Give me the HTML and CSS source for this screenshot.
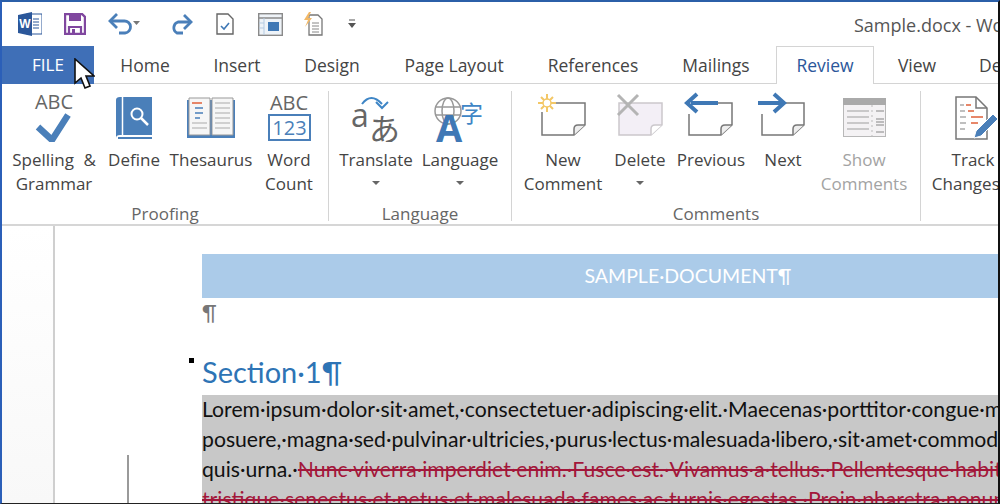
FILE: index.html
```html
<!DOCTYPE html>
<html lang="en">
<head>
    <meta charset="UTF-8">
    <title>Sample.docx - Word</title>
    <link rel="stylesheet" href="styles.css">
</head>
<body>
<div class="app">
    <div class="titlebar">
        <svg class="qat" width="24" height="24" viewBox="0 0 24 24">
            <rect x="9" y="2" width="15" height="20" fill="#fff" stroke="#2b579a"/>
            <path d="M15 7h6M15 10h6M15 13h6M15 16h6" stroke="#2b579a"/>
            <path d="M0 3 14 0v24L0 21z" fill="#2b579a"/>
            <text x="7" y="16" class="word-w">W</text>
        </svg>
        <svg class="qat gap22" width="22" height="22" viewBox="0 0 22 22">
            <path d="M1 1h17l3 3v17H1z" fill="none" stroke="#80479f" stroke-width="2.4"/>
            <rect x="5" y="1" width="12" height="7" fill="#80479f"/>
            <path d="M5 21v-7h12v7" fill="none" stroke="#80479f" stroke-width="2.2"/>
            <rect x="8" y="16" width="3" height="5" fill="#80479f"/>
        </svg>
        <svg class="qat gap22" width="32" height="22" viewBox="0 0 32 22">
            <path d="M3 8h13a6 6 0 0 1 1 12h-6" fill="none" stroke="#4a7fb9" stroke-width="2.8"/>
            <path d="M9 1 2 8l7 7" fill="none" stroke="#4a7fb9" stroke-width="2.8"/>
            <path d="M25 8h7l-3.500 4z" fill="#777"/>
        </svg>
        <svg class="qat gap30" width="23" height="22" viewBox="0 0 23 22">
            <path d="M20 9H8a6 6 0 0 0-1 11h6" fill="none" stroke="#4a7fb9" stroke-width="2.8"/>
            <path d="M14 2l7 7-7 7" fill="none" stroke="#4a7fb9" stroke-width="2.8"/>
        </svg>
        <svg class="qat gap23" width="18" height="22" viewBox="0 0 18 22">
            <path d="M1 1h11l5 5v15H1z" fill="#fff" stroke="#666" stroke-width="1.400"/>
            <path d="M5 13l3 3 5-6" fill="none" stroke="#3f78b5" stroke-width="1.600"/>
        </svg>
        <svg class="qat gap24" width="25" height="23" viewBox="0 0 25 23">
            <rect x=".7" y=".7" width="23.600" height="21.600" fill="#eef3f8" stroke="#8a8a8a" stroke-width="1.400"/>
            <path d="M1 5h23" stroke="#8a8a8a" stroke-width="1.500"/>
            <path d="M6 5v17M1 10h5M1 15h5" stroke="#b5cbe2"/>
            <rect x="10" y="9" width="11" height="9" fill="#3f78b5"/>
        </svg>
        <svg class="qat gap20" width="20" height="24" viewBox="0 0 20 24">
            <path d="M6 3h9l4 4v16H6z" fill="#fff" stroke="#777" stroke-width="1.300"/>
            <path d="M9 11h7M9 14h7M9 17h7M9 20h7" stroke="#888"/>
            <path d="M6 0 1 8h4l-3 7 7-9H5l3-6z" fill="#f2b866"/>
        </svg>
        <svg class="qat gap25" width="8" height="10" viewBox="0 0 8 10">
            <path d="M1 1h6" stroke="#555"/>
            <path d="M0 4h8L4 9z" fill="#555"/>
        </svg>
        <div class="doc-title">Sample.docx - Word</div>
    </div>

    <div class="tabs">
        <div class="tab tab-file">FILE</div>
        <div class="tab w102">Home</div>
        <div class="tab w82">Insert</div>
        <div class="tab w108">Design</div>
        <div class="tab w136">Page Layout</div>
        <div class="tab w142">References</div>
        <div class="tab w104">Mailings</div>
        <div class="tab tab-active">Review</div>
        <div class="tab w86">View</div>
        <div class="tab tab-clip">Developer</div>
    </div>

    <div class="ribbon">
        <div class="group group-proofing">
            <div class="buttons">
                <div class="btn w86 btn-spelling">
                    <svg class="icon" viewBox="0 0 60 50">
                        <text x="30" y="17" class="abc">ABC</text>
                        <path d="M14 35l14 13 16-25" fill="none" stroke="#4a7fb9" stroke-width="6.500"/>
                    </svg>
                    <span>Spelling &amp;<br>Grammar</span>
                </div>
                <div class="btn w74">
                    <svg class="icon" viewBox="0 0 60 50">
                        <path d="M12 8q0-3 4-3h32v38H16q-4 0-4 3z" fill="#4a7fb9"/>
                        <path d="M18.500 5v38" stroke="#fff" stroke-width="1.500"/>
                        <path d="M14 46h34" stroke="#4a7fb9" stroke-width="2"/>
                        <circle cx="33" cy="22" r="5.500" fill="none" stroke="#fff" stroke-width="2"/>
                        <path d="M37 26l7 7" stroke="#fff" stroke-width="2.500"/>
                    </svg>
                    <span>Define</span>
                </div>
                <div class="btn w80">
                    <svg class="icon" viewBox="0 0 60 50">
                        <path d="M6 8h48v38H6z" fill="#4a7fb9"/>
                        <path d="M8 6h21v37H8zM31 6h21v37H31z" fill="#f6f6f6" stroke="#999"/>
                        <path d="M11 11h10" stroke="#e0603a" stroke-width="1.500"/>
                        <path d="M14 16h8M14 21h8M14 26h5" stroke="#4a7fb9" stroke-width="1.500"/>
                        <path d="M11 31h15M11 36h15M34 11h15M34 16h15M34 21h15M34 26h15M34 31h15M34 36h15" stroke="#aaa"/>
                    </svg>
                    <span>Thesaurus</span>
                </div>
                <div class="btn w76">
                    <svg class="icon" viewBox="0 0 60 50">
                        <text x="30" y="18" class="abc">ABC</text>
                        <rect x="10" y="23" width="41" height="25" fill="#fff" stroke="#4a7fb9" stroke-width="2"/>
                        <text x="30.500" y="43" class="num">123</text>
                    </svg>
                    <span>Word<br>Count</span>
                </div>
            </div>
            <div class="group-label">Proofing</div>
        </div>

        <div class="group group-language">
            <div class="buttons">
                <div class="btn w84">
                    <svg class="icon" viewBox="0 0 60 50">
                        <text x="5" y="35" class="glyph-a">a</text>
                        <text x="23" y="49" class="glyph-kana">あ</text>
                        <path d="M16 12Q25 0 36 12" fill="none" stroke="#3f86c6" stroke-width="2"/>
                        <path d="M30 10l6 6 6-6" fill="none" stroke="#3f86c6" stroke-width="2"/>
                    </svg>
                    <span>Translate</span>
                    <i class="caret"></i>
                </div>
                <div class="btn w84">
                    <svg class="icon" viewBox="0 0 60 50">
                        <circle cx="18" cy="19" r="13" fill="none" stroke="#999" stroke-width="1.500"/>
                        <ellipse cx="18" cy="19" rx="6" ry="13" fill="none" stroke="#999" stroke-width="1.500"/>
                        <path d="M5 15h26M5 23h26" stroke="#999" stroke-width="1.500"/>
                        <text x="6" y="50" class="glyph-big-a">A</text>
                        <text x="30" y="30" class="glyph-zi">字</text>
                    </svg>
                    <span>Language</span>
                    <i class="caret"></i>
                </div>
            </div>
            <div class="group-label">Language</div>
        </div>

        <div class="group group-comments">
            <div class="buttons">
                <div class="btn w86">
                    <svg class="icon" viewBox="0 0 60 50">
                        <path d="M20 11h32v22L41 43H9V20" fill="#fff" stroke="#777" stroke-width="1.500"/>
                        <path d="M41 43v-6q0-4 4-4h7" fill="#eee" stroke="#777" stroke-width="1.500"/>
                        <path d="M14 2v18M5 11h18M8 5l12 12M20 5 8 17" stroke="#f3c766" stroke-width="2"/>
                        <circle cx="14" cy="11" r="4" fill="#fff" stroke="#f3c766" stroke-width="1.500"/>
                    </svg>
                    <span>New<br>Comment</span>
                </div>
                <div class="btn w68">
                    <svg class="icon" viewBox="0 0 60 50">
                        <path d="M9 11h43v22L41 43H9z" fill="#f3eff6" stroke="#cbc8cc" stroke-width="1.500"/>
                        <path d="M41 43v-6q0-4 4-4h7" fill="#fff" stroke="#cbc8cc" stroke-width="1.500"/>
                        <path d="M8 3l20 20M28 3 8 23" stroke="#b4b4b4" stroke-width="3"/>
                    </svg>
                    <span>Delete</span>
                    <i class="caret"></i>
                </div>
                <div class="btn w74">
                    <svg class="icon" viewBox="0 0 60 50">
                        <path d="M34 11h17v22L40 43H8V22" fill="#fff" stroke="#777" stroke-width="1.500"/>
                        <path d="M40 43v-6q0-4 4-4h7" fill="#eee" stroke="#777" stroke-width="1.500"/>
                        <path d="M37 11H10" stroke="#3f78b5" stroke-width="4"/>
                        <path d="M16 2 6 11l10 9" fill="none" stroke="#3f78b5" stroke-width="4"/>
                    </svg>
                    <span>Previous</span>
                </div>
                <div class="btn w70">
                    <svg class="icon" viewBox="0 0 60 50">
                        <path d="M32 11h19v22L40 43H9V22" fill="#fff" stroke="#777" stroke-width="1.500"/>
                        <path d="M40 43v-6q0-4 4-4h7" fill="#eee" stroke="#777" stroke-width="1.500"/>
                        <path d="M5 11h26" stroke="#3f78b5" stroke-width="4"/>
                        <path d="M21 2l10 9-10 9" fill="none" stroke="#3f78b5" stroke-width="4"/>
                    </svg>
                    <span>Next</span>
                </div>
                <div class="btn w92 disabled">
                    <svg class="icon" viewBox="0 0 60 50">
                        <rect x="9.500" y="6.500" width="42" height="38" fill="#f4f2f4" stroke="#b8b8b8"/>
                        <rect x="9" y="6" width="43" height="7" fill="#aaa"/>
                        <path d="M13 19h22M13 25h22M13 31h22M13 37h22" stroke="#bbb" stroke-width="1.500"/>
                        <path d="M38 13v32" stroke="#bbb" stroke-dasharray="2 3"/>
                        <path d="M42 19h8M42 27h8M42 30h8M42 33h8M42 40h8" stroke="#aaa" stroke-width="1.500"/>
                    </svg>
                    <span>Show<br>Comments</span>
                </div>
            </div>
            <div class="group-label">Comments</div>
        </div>

        <div class="group group-tracking">
            <div class="buttons">
                <div class="btn w96">
                    <svg class="icon" viewBox="0 0 60 50">
                        <g transform="translate(-8 0)">
                            <path d="M21 5h20l11 11v31H21z" fill="#fff" stroke="#777" stroke-width="1.500"/>
                            <path d="M41 5v11h11" fill="none" stroke="#777" stroke-width="1.500"/>
                            <path d="M25 13h4M25 19h5M25 25h6M25 31h6M25 37h5" stroke="#aaa" stroke-width="1.500"/>
                            <path d="M31 13h5M33 19h6M36 25h12M36 31h7" stroke="#e0603a" stroke-width="1.500"/>
                            <path d="M39 46l2-7 17-17 5 5-17 17z" fill="#4a7fb9" stroke="#fff"/>
                        </g>
                    </svg>
                    <span>Track<br>Changes <i class="caret-inline"></i></span>
                </div>
            </div>
        </div>
    </div>

    <div class="doc">
        <div class="ruler"></div>
        <div class="page">
            <div class="banner">SAMPLE·DOCUMENT¶</div>
            <div class="pilcrow">¶</div>
            <h1 class="heading">Section·1¶</h1>
            <div class="selected">
                <div class="line">Lorem·ipsum·dolor·sit·amet,·consectetuer·adipiscing·elit.·Maecenas·porttitor·congue·massa.</div>
                <div class="line">posuere,·magna·sed·pulvinar·ultricies,·purus·lectus·malesuada·libero,·sit·amet·commodo·magna</div>
                <div class="line">quis·urna.·<span class="deleted">Nunc·viverra·imperdiet·enim.·Fusce·est.·Vivamus·a·tellus.·Pellentesque·habitant·morbi</span></div>
                <div class="line"><span class="deleted">tristique·senectus·et·netus·et·malesuada·fames·ac·turpis·egestas.·Proin·pharetra·nonummy·pede.</span></div>
            </div>
        </div>
        <div class="para-mark"></div>
        <div class="change-bar"></div>
    </div>

    <svg class="cursor" width="22" height="34" viewBox="0 0 22 34">
        <path d="M2 1v24l6-5 4 10 5-2-4-10h8z" fill="#fff" stroke="#111" stroke-width="1.600"/>
    </svg>
</div>
</body>
</html>
```

FILE: styles.css
```css
* {
    box-sizing: border-box;
}
html, body {
    margin: 0;
    height: 100%;
    background: #fff;
}
body {
    overflow: hidden;
}
.app {
    position: relative;
    width: 1000px;
    height: 504px;
    overflow: hidden;
    display: flex;
    flex-direction: column;
    border-top: 2px solid #2b5fa8;
    border-left: 2px solid #2b5fb8;
    border-right: 2px solid #111;
    border-bottom: 1px solid #222;
    font-family: "Open Sans", sans-serif;
    color: #444;
}

/* title bar */
.titlebar {
    display: flex;
    align-items: center;
    height: 44px;
    flex-shrink: 0;
    padding-left: 16px;
    white-space: nowrap;
}
.qat {
    flex-shrink: 0;
}
.gap20 { margin-left: 20px; }
.gap22 { margin-left: 22px; }
.gap23 { margin-left: 23px; }
.gap24 { margin-left: 24px; }
.gap25 { margin-left: 25px; }
.gap30 { margin-left: 30px; }
.word-w {
    font-family: "Liberation Sans", sans-serif;
    font-size: 12px;
    font-weight: bold;
    fill: #fff;
    text-anchor: middle;
}
.doc-title {
    margin-left: 498px;
    padding-top: 2px;
    font-size: 18px;
    color: #555;
    flex-shrink: 0;
}

/* tabs */
.tabs {
    display: flex;
    height: 38px;
    flex-shrink: 0;
    border-bottom: 1px solid #d4d4d4;
    font-size: 17.500px;
    white-space: nowrap;
}
.tab {
    flex-shrink: 0;
    text-align: center;
    line-height: 38px;
}
.tab-file {
    width: 92px;
    height: 38px;
    background: #3f6fb7;
    color: #fff;
    font-size: 17px;
}
.tab-active {
    width: 98px;
    height: 38px;
    margin-left: 8px;
    line-height: 37px;
    background: #fff;
    border: 1px solid #d4d4d4;
    border-bottom: none;
    color: #2b579a;
}
.tab-clip {
    padding-left: 19px;
    text-align: left;
}

/* ribbon */
.ribbon {
    display: flex;
    height: 142px;
    flex-shrink: 0;
    border-bottom: 2px solid #d6d6d6;
    white-space: nowrap;
}
.group {
    flex-shrink: 0;
    height: 130px;
    margin-top: 7px;
    display: flex;
    flex-direction: column;
    border-right: 1px solid #d4d4d4;
}
.group-proofing { width: 327px; }
.group-language { width: 183px; }
.group-comments { width: 409px; }
.group-tracking { border-right: none; }
.group-proofing .buttons { padding-left: 9px; }
.group-language .buttons { padding-left: 5px; }
.group-comments .buttons { padding-left: 8px; }
.group-tracking .buttons { padding-left: 4px; }
.buttons {
    display: flex;
    height: 113px;
    flex-shrink: 0;
}
.btn {
    flex-shrink: 0;
    display: flex;
    flex-direction: column;
    align-items: center;
    text-align: center;
    font-size: 17px;
    line-height: 24px;
}
.btn-spelling {
    word-spacing: 5px;
}
.w68 { width: 68px; }
.w70 { width: 70px; }
.w74 { width: 74px; }
.w76 { width: 76px; }
.w80 { width: 80px; }
.w82 { width: 82px; }
.w84 { width: 84px; }
.w86 { width: 86px; }
.w92 { width: 92px; }
.w96 { width: 96px; }
.w102 { width: 102px; }
.w104 { width: 104px; }
.w108 { width: 108px; }
.w136 { width: 136px; }
.w142 { width: 142px; }
.icon {
    width: 60px;
    height: 50px;
    flex-shrink: 0;
    margin: 1px 0 6px;
}
.disabled {
    color: #a3a3a3;
}
.caret {
    width: 0;
    height: 0;
    margin-top: 9px;
    border-left: 4px solid transparent;
    border-right: 4px solid transparent;
    border-top: 4px solid #666;
}
.caret-inline {
    display: inline-block;
    width: 0;
    height: 0;
    margin-left: 2px;
    vertical-align: middle;
    border-left: 4px solid transparent;
    border-right: 4px solid transparent;
    border-top: 4px solid #666;
}
.group-label {
    height: 17px;
    text-align: center;
    font-size: 17px;
    line-height: 20px;
    color: #666;
}
.abc {
    font-size: 20px;
    fill: #666;
    text-anchor: middle;
}
.num {
    font-size: 20px;
    fill: #4a7fb9;
    text-anchor: middle;
}
.glyph-a {
    font-size: 32px;
    fill: #666;
}
.glyph-kana {
    font-family: "Noto Sans CJK JP", sans-serif;
    font-size: 31px;
    fill: #666;
}
.glyph-big-a {
    font-size: 38px;
    font-weight: bold;
    fill: #3f78b5;
}
.glyph-zi {
    font-family: "Noto Sans CJK SC", sans-serif;
    font-size: 23px;
    fill: #3f86c6;
}

/* document */
.doc {
    position: relative;
    flex: 1;
    display: flex;
    overflow: hidden;
}
.ruler {
    width: 53px;
    flex-shrink: 0;
    border-right: 2px solid #cfcfcf;
    background: linear-gradient(#fff, #f8f8f8);
}
.page {
    flex-shrink: 0;
    width: 972px;
    margin-left: 147px;
    padding-top: 28px;
    font-family: "Lato", sans-serif;
}
.banner {
    height: 44px;
    background: #abcbe9;
    color: #fff;
    font-size: 19.500px;
    line-height: 43px;
    text-align: center;
}
.pilcrow {
    height: 30px;
    font-size: 21px;
    line-height: 27px;
    color: #777;
}
.heading {
    margin: 21px 0 0;
    height: 46px;
    font-size: 29px;
    font-weight: normal;
    line-height: 46px;
    color: #2e74b5;
}
.selected {
    background: #c8c8c8;
    color: #111;
    font-size: 21.200px;
}
.line {
    height: 30px;
    line-height: 28px;
    white-space: nowrap;
}
.deleted {
    color: #a3173a;
    text-decoration: line-through;
}
.para-mark {
    position: absolute;
    left: 187px;
    top: 132px;
    width: 5px;
    height: 5px;
    background: #000;
}
.change-bar {
    position: absolute;
    left: 125px;
    top: 229px;
    width: 2px;
    height: 50px;
    background: #9a9a9a;
}
.cursor {
    position: absolute;
    left: 71px;
    top: 56px;
}
```
